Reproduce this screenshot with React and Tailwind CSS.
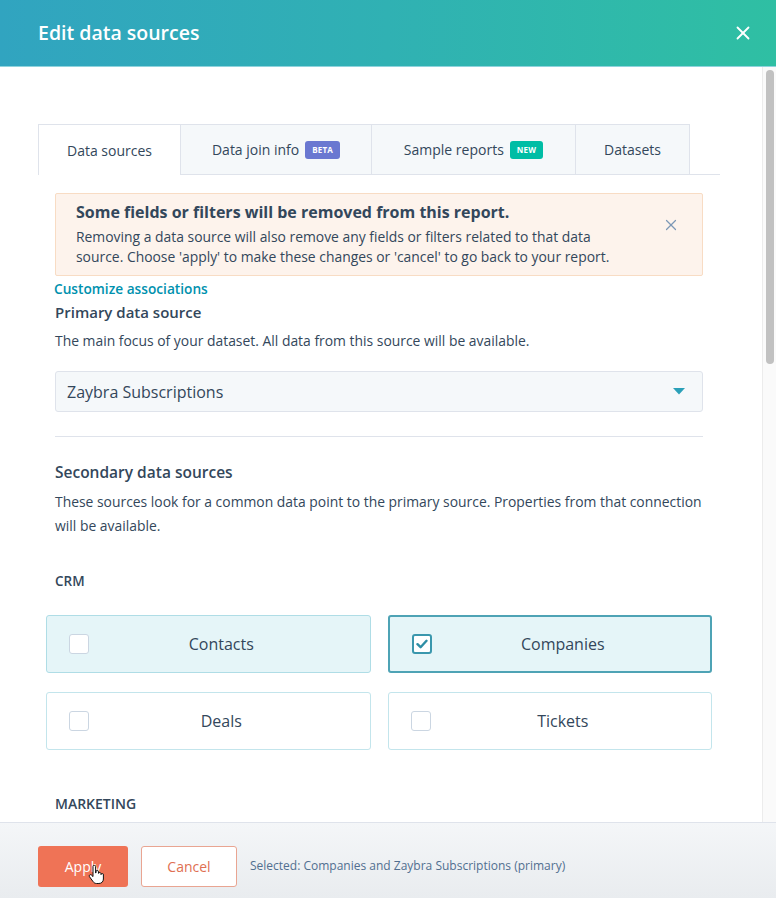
import { X } from 'lucide-react';

// ── Tabs ──────────────────────────────────────────────────────────────────────
function Badge({ children, color }) {
  return (
    <span className={`ml-[6px] inline-flex h-[18px] items-center rounded-[3px] px-[7px] text-[8px] font-bold tracking-wide text-white ${color}`}>
      {children}
    </span>
  );
}

function Tabs() {
  return (
    <div className="flex h-[51px] border-b border-[#dfe3eb]">
      <div className="relative -mb-px flex w-[143px] items-center justify-center border border-b-0 border-[#dfe3eb] bg-white text-[14px] text-[#33475b]">
        Data sources
      </div>
      <div className="flex w-[191px] items-center justify-center border-t border-r border-[#dfe3eb] bg-[#f5f8fa] text-[14px] text-[#33475b]">
        Data join info
        <Badge color="bg-[#6a78d1]">BETA</Badge>
      </div>
      <div className="flex w-[204px] items-center justify-center border-t border-r border-[#dfe3eb] bg-[#f5f8fa] text-[14px] text-[#33475b]">
        Sample reports
        <Badge color="bg-[#00bda5]">NEW</Badge>
      </div>
      <div className="flex w-[114px] items-center justify-center border-t border-r border-[#dfe3eb] bg-[#f5f8fa] text-[14px] text-[#33475b]">
        Datasets
      </div>
    </div>
  );
}

// ── Source card ───────────────────────────────────────────────────────────────
function SourceCard({ label, checked, tinted }) {
  const frame = checked
    ? 'border-2 border-[#4ea3b5] bg-[#e5f5f8]'
    : tinted
      ? 'border border-[#afdde6] bg-[#e5f5f8]'
      : 'border border-[#c3e5ec] bg-white';
  return (
    <div className={`relative flex h-[58px] items-center justify-center rounded-[3px] pl-[26px] ${frame}`}>
      <span
        className={`absolute left-[22px] top-1/2 flex h-[20px] w-[20px] -translate-y-1/2 items-center justify-center rounded-[3px] bg-white ${
          checked ? 'border-2 border-[#3a97ad]' : 'border border-[#cbd6e2]'
        }`}
      >
        {checked && (
          <svg width="12" height="10" viewBox="0 0 12 10">
            <path d="M1.5 5.2 L4.6 8.2 L10.5 1.8" fill="none" stroke="#2d8ea5" strokeWidth="2.4" strokeLinecap="round" strokeLinejoin="round" />
          </svg>
        )}
      </span>
      <span className="text-[16px] text-[#33475b]">{label}</span>
    </div>
  );
}

// ── Main ──────────────────────────────────────────────────────────────────────
export default function App() {
  return (
    <div className="flex h-[898px] w-[776px] flex-col overflow-hidden bg-white font-['Open_Sans',_sans-serif] text-[#33475b]">
      {/* Header */}
      <div className="flex h-[67px] shrink-0 items-center justify-between border-b border-[#8fd3dd] bg-gradient-to-r from-[#31a4c0] via-[#30b1b3] to-[#2fbfa3] pl-[38px] pr-[22px]">
        <h1 className="text-[19.5px] font-semibold text-white">Edit data sources</h1>
        <X size={22} strokeWidth={2} className="text-white" />
      </div>

      {/* Body */}
      <div className="flex min-h-0 flex-1">
        <div className="flex-1 overflow-hidden px-[38px] pt-[57px]">
          <div className="w-[682px]">
            <Tabs />

            <div className="px-[17px]">
              {/* Warning */}
              <div className="mt-[18px] flex h-[83px] items-start justify-between rounded-[2px] border border-[#f8dcc4] bg-[#fdf3ec] pl-[20px] pr-[22px] pt-[7px]">
                <div>
                  <p className="text-[16px] font-bold leading-[22px] text-[#33475b]">
                    Some fields or filters will be removed from this report.
                  </p>
                  <p className="mt-[4px] text-[13.9px] leading-[20px] text-[#33475b]">
                    Removing a data source will also remove any fields or filters related to that data
                    <br />
                    source. Choose 'apply' to make these changes or 'cancel' to go back to your report.
                  </p>
                </div>
                <X size={18} strokeWidth={1.6} className="mt-[15px] text-[#7c98b6]" />
              </div>

              <p className="-ml-[1px] mt-[4px] text-[13.7px] font-semibold leading-[18px] text-[#0091ae]">Customize associations</p>
              <h2 className="mt-[4px] text-[15px] font-semibold leading-[20px]">Primary data source</h2>
              <p className="mt-[9px] text-[13.9px] leading-[20px]">
                The main focus of your dataset. All data from this source will be available.
              </p>

              {/* Select */}
              <div className="mt-[20px] flex h-[41px] items-center justify-between rounded-[3px] border border-[#dfe3eb] bg-[#f5f8fa] pl-[11px] pr-[17px]">
                <span className="text-[16px] text-[#33475b]">Zaybra Subscriptions</span>
                <svg width="12" height="7" viewBox="0 0 12 7">
                  <path d="M0 0 H12 L6 6.5 Z" fill="#2aa0b8" />
                </svg>
              </div>

              <div className="mt-[24px] h-px bg-[#dfe3eb]" />

              <h2 className="mt-[24px] text-[15.5px] font-semibold leading-[22px]">Secondary data sources</h2>
              <p className="mt-[7px] text-[13.9px] leading-[24px]">
                These sources look for a common data point to the primary source. Properties from that connection
                <br />
                will be available.
              </p>

              <p className="mt-[33px] text-[13.5px] font-semibold leading-[20px]">CRM</p>
            </div>

            {/* Cards */}
            <div className="mt-[24px] grid grid-cols-2 gap-x-[17px] gap-y-[19px] px-[8px]">
              <SourceCard label="Contacts" tinted />
              <SourceCard label="Companies" checked />
              <SourceCard label="Deals" />
              <SourceCard label="Tickets" />
            </div>

            <p className="mt-[44px] px-[17px] text-[14px] font-semibold leading-[20px]">MARKETING</p>
          </div>
        </div>

        {/* Scrollbar */}
        <div className="w-[14px] shrink-0 border-l border-[#ececec] bg-[#fafafa] pt-[3px]">
          <div className="mx-auto h-[294px] w-[8px] rounded-full bg-[#c1c1c1]" />
        </div>
      </div>

      {/* Footer */}
      <div className="relative flex h-[76px] shrink-0 items-center gap-[13px] border-t border-[#dfe3eb] bg-gradient-to-b from-[#f4f6f8] to-[#e9ecef] pl-[38px] pt-[11px]">
        <button className="h-[41px] w-[90px] rounded-[3px] bg-[#ef7356] text-[14px] text-white">Apply</button>
        <button className="h-[41px] w-[96px] rounded-[3px] border border-[#e9a592] bg-white text-[14px] text-[#e06f52]">Cancel</button>
        <span className="text-[12px] text-[#516f90]">Selected: Companies and Zaybra Subscriptions (primary)</span>
        <svg className="absolute left-[88px] top-[42px]" width="16" height="20" viewBox="0 0 16 20">
          <path
            d="M5 1.5 a1.3 1.3 0 0 1 2.6 0 V8 h0.3 V6.8 a1.3 1.3 0 0 1 2.6 0 V8.4 a1.3 1.3 0 0 1 2.5 0.2 V9.6 a1.2 1.2 0 0 1 2.4 0.3 V14 c0 2.6 -1.8 4.5 -4.5 4.5 H8.5 c-1.6 0 -2.6 -0.8 -3.5 -2 L1.4 11.6 a1.3 1.3 0 0 1 2 -1.6 L5 11.6 Z"
            fill="#fff"
            stroke="#111"
            strokeWidth="1"
            strokeLinejoin="round"
          />
        </svg>
      </div>
    </div>
  );
}
